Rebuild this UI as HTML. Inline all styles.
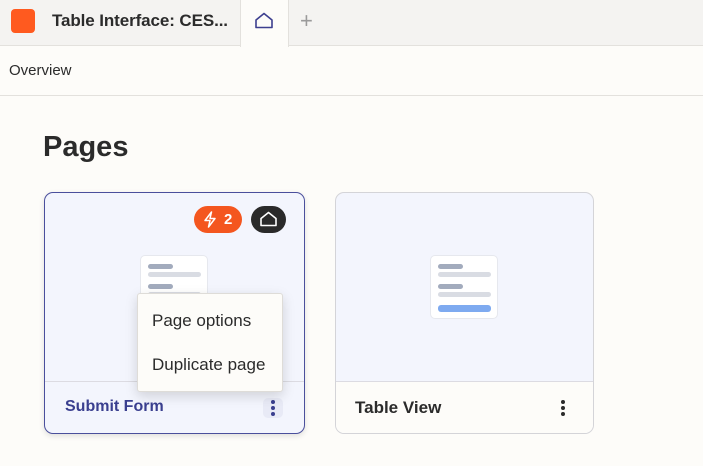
<!DOCTYPE html><html><head><style>
*{margin:0;padding:0;box-sizing:border-box}
body{width:703px;height:466px;background:#fdfcf9;font-family:"Liberation Sans",Arial,sans-serif;position:relative;overflow:hidden;color:#2b2b2b}
.a{position:absolute}
.thumb{position:absolute;width:68px;height:64px;background:#fff;border:1px solid #e6e8ee;border-radius:5px}
.thumb i{position:absolute;left:7px;height:5px;border-radius:3px;display:block}
</style></head><body>
<div class="a" style="left:0;top:0;width:703px;height:46px;background:#f4f3f1;border-bottom:1px solid #e3e1dd"></div>
<div class="a" style="left:11px;top:9px;width:24px;height:24px;background:#ff5a1f;border-radius:4px"></div>
<div class="a" style="left:52px;top:11px;font-size:17px;font-weight:bold;color:#2b2b2b;letter-spacing:-0.1px">Table Interface: CES...</div>
<div class="a" style="left:240px;top:0;width:49px;height:47px;background:#fdfcf9;border-left:1px solid #e3e1dd;border-right:1px solid #e3e1dd"></div>
<svg class="a" style="left:254px;top:12px" width="20" height="17" viewBox="0 0 20 17"><path d="M2 8L10 1.5L18 8V15.5H2Z" fill="none" stroke="#3d3f8f" stroke-width="1.6" stroke-linejoin="round"/></svg>
<div class="a" style="left:300px;top:8px;font-size:22px;color:#9a9a9a">+</div>
<div class="a" style="left:9px;top:62px;font-size:15px;color:#2b2b2b">Overview</div>
<div class="a" style="left:0;top:95px;width:703px;height:1px;background:#e3e1dd"></div>
<div class="a" style="left:43px;top:131px;font-size:29px;font-weight:bold;color:#2b2b2b">Pages</div>

<div class="a" style="left:44px;top:192px;width:261px;height:242px;background:#f3f5fd;border:1px solid #4a4f9c;border-radius:9px;box-shadow:0 2px 6px rgba(0,0,0,.12)"></div>
<div class="a" style="left:45px;top:381px;width:259px;height:1px;background:#dcdbe2"></div>
<div class="a" style="left:194px;top:206px;width:48px;height:27px;background:#f4561f;border-radius:14px"></div>
<svg class="a" style="left:203px;top:211px" width="14" height="17" viewBox="0 0 14 17"><path d="M8.5 1L2 9.5H7L5.5 16L12 7.5H7Z" fill="none" stroke="#fff" stroke-width="1.5" stroke-linejoin="round"/></svg>
<div class="a" style="left:224px;top:211px;font-size:15px;font-weight:bold;color:#fff">2</div>
<div class="a" style="left:251px;top:206px;width:35px;height:27px;background:#2a2a2a;border-radius:14px"></div>
<svg class="a" style="left:259px;top:211px" width="19" height="16" viewBox="0 0 19 16"><path d="M2 7.5L9.5 1.5L17 7.5V14.5H2Z" fill="none" stroke="#fff" stroke-width="1.6" stroke-linejoin="round"/></svg>
<div class="thumb" style="left:140px;top:255px"><i style="top:8px;width:25px;background:#a2abbd"></i><i style="top:16px;width:53px;background:#d9dce3"></i><i style="top:28px;width:25px;background:#a2abbd"></i><i style="top:36px;width:53px;background:#d9dce3"></i></div>
<div class="a" style="left:65px;top:398px;font-size:16px;font-weight:bold;color:#3a3f8f">Submit Form</div>
<div class="a" style="left:263px;top:398px;width:20px;height:20px;border-radius:5px;background:#e8eaf6"></div>
<svg class="a" style="left:269px;top:399px" width="8" height="18"><circle cx="4" cy="3" r="2" fill="#3a3f8f"/><circle cx="4" cy="9" r="2" fill="#3a3f8f"/><circle cx="4" cy="15" r="2" fill="#3a3f8f"/></svg>

<div class="a" style="left:137px;top:293px;width:146px;height:99px;background:#fdfcf9;border:1px solid #dedcd8;border-radius:3px;box-shadow:0 4px 12px rgba(0,0,0,.15)"></div>
<div class="a" style="left:152px;top:311px;font-size:17px;color:#2b2b2b">Page options</div>
<div class="a" style="left:152px;top:355px;font-size:17px;color:#2b2b2b">Duplicate page</div>

<div class="a" style="left:335px;top:192px;width:259px;height:242px;background:#f3f5fd;border:1px solid #d4d4d8;border-radius:9px"></div>
<div class="a" style="left:336px;top:381px;width:257px;height:52px;background:#fdfcf9;border-top:1px solid #dcdbe2;border-radius:0 0 8px 8px"></div>
<div class="thumb" style="left:430px;top:255px"><i style="top:8px;width:25px;background:#a2abbd"></i><i style="top:16px;width:53px;background:#d9dce3"></i><i style="top:28px;width:25px;background:#a2abbd"></i><i style="top:36px;width:53px;background:#d9dce3"></i><i style="top:49px;width:53px;height:7px;background:#7eaaf0"></i></div>
<div class="a" style="left:355px;top:398px;font-size:17px;font-weight:bold;color:#2b2b2b">Table View</div>
<svg class="a" style="left:559px;top:399px" width="8" height="18"><circle cx="4" cy="3" r="2" fill="#2b2b2b"/><circle cx="4" cy="9" r="2" fill="#2b2b2b"/><circle cx="4" cy="15" r="2" fill="#2b2b2b"/></svg>
</body></html>
